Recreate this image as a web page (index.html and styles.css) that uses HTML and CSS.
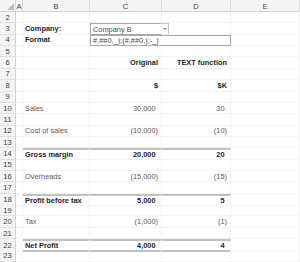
FILE: index.html
```html
<!DOCTYPE html>
<html lang="en">
<head>
  <meta charset="UTF-8" />
  <title>Number format - TEXT function</title>
  <link rel="stylesheet" href="styles.css">
</head>
<body>
  <div class="sheet">
    <div class="row head">
      <div class="corner">
        <svg width="16" height="12" viewBox="0 0 16 12"><polygon points="14,3 14,10 7,10" fill="#bdbdbd" /></svg>
      </div>
      <div class="col">A</div>
      <div class="col">B</div>
      <div class="col">C</div>
      <div class="col">D</div>
      <div class="col">E</div>
    </div>

    <div class="row"><div class="rn">2</div><div class="c"></div><div class="c"></div><div class="c"></div><div class="c"></div><div class="c"></div></div>
    <div class="row">
      <div class="rn">3</div><div class="c"></div>
      <div class="c lbl b">Company:</div>
      <div class="c box">Company B<span class="drop"><svg width="6" height="4" viewBox="0 0 6 4"><polygon points="1,1 5,1 3,3" fill="#888" /></svg></span></div>
      <div class="c"></div><div class="c"></div>
    </div>
    <div class="row">
      <div class="rn">4</div><div class="c"></div>
      <div class="c lbl b">Format</div>
      <div class="c box wide">#,##0,_);(#,##0,);-_)</div>
      <div class="c"></div>
    </div>
    <div class="row"><div class="rn">5</div><div class="c"></div><div class="c"></div><div class="c"></div><div class="c"></div><div class="c"></div></div>
    <div class="row">
      <div class="rn">6</div><div class="c"></div><div class="c"></div>
      <div class="c n b">Original</div>
      <div class="c n b">TEXT function</div>
      <div class="c"></div>
    </div>
    <div class="row"><div class="rn">7</div><div class="c"></div><div class="c"></div><div class="c"></div><div class="c"></div><div class="c"></div></div>
    <div class="row">
      <div class="rn">8</div><div class="c"></div><div class="c"></div>
      <div class="c n b">$</div>
      <div class="c n b">$K</div>
      <div class="c"></div>
    </div>
    <div class="row"><div class="rn">9</div><div class="c"></div><div class="c"></div><div class="c"></div><div class="c"></div><div class="c"></div></div>
    <div class="row">
      <div class="rn">10</div><div class="c"></div>
      <div class="c lbl">Sales</div>
      <div class="c n p">30,000</div>
      <div class="c n p">30</div>
      <div class="c"></div>
    </div>
    <div class="row"><div class="rn">11</div><div class="c"></div><div class="c"></div><div class="c"></div><div class="c"></div><div class="c"></div></div>
    <div class="row">
      <div class="rn">12</div><div class="c"></div>
      <div class="c lbl">Cost of sales</div>
      <div class="c n">(10,000)</div>
      <div class="c n">(10)</div>
      <div class="c"></div>
    </div>
    <div class="row"><div class="rn">13</div><div class="c"></div><div class="c"></div><div class="c"></div><div class="c"></div><div class="c"></div></div>
    <div class="row">
      <div class="rn">14</div><div class="c"></div>
      <div class="c lbl b tt">Gross margin</div>
      <div class="c n p b tt">20,000</div>
      <div class="c n p b tt">20</div>
      <div class="c"></div>
    </div>
    <div class="row"><div class="rn">15</div><div class="c"></div><div class="c"></div><div class="c"></div><div class="c"></div><div class="c"></div></div>
    <div class="row">
      <div class="rn">16</div><div class="c"></div>
      <div class="c lbl">Overheads</div>
      <div class="c n">(15,000)</div>
      <div class="c n">(15)</div>
      <div class="c"></div>
    </div>
    <div class="row"><div class="rn">17</div><div class="c"></div><div class="c"></div><div class="c"></div><div class="c"></div><div class="c"></div></div>
    <div class="row">
      <div class="rn">18</div><div class="c"></div>
      <div class="c lbl b tt">Profit before tax</div>
      <div class="c n p b tt">5,000</div>
      <div class="c n p b tt">5</div>
      <div class="c"></div>
    </div>
    <div class="row"><div class="rn">19</div><div class="c"></div><div class="c"></div><div class="c"></div><div class="c"></div><div class="c"></div></div>
    <div class="row">
      <div class="rn">20</div><div class="c"></div>
      <div class="c lbl">Tax</div>
      <div class="c n">(1,000)</div>
      <div class="c n">(1)</div>
      <div class="c"></div>
    </div>
    <div class="row"><div class="rn">21</div><div class="c"></div><div class="c"></div><div class="c"></div><div class="c"></div><div class="c"></div></div>
    <div class="row">
      <div class="rn">22</div><div class="c"></div>
      <div class="c lbl b tt bb">Net Profit</div>
      <div class="c n p b tt bb">4,000</div>
      <div class="c n p b tt bb">4</div>
      <div class="c"></div>
    </div>
    <div class="row"><div class="rn">23</div><div class="c"></div><div class="c"></div><div class="c"></div><div class="c"></div><div class="c"></div></div>
  </div>
</body>
</html>
```

FILE: styles.css
```css
* {
  box-sizing: border-box;
}

body {
  margin: 0;
  background: #fff;
  font-family: 'Liberation Sans', Arial, sans-serif;
  font-size: 7.4px;
  color: #5a5a5a;
}

.sheet {
  width: 300px;
  height: 262px;
  display: flex;
  flex-direction: column;
  overflow: hidden;
}

.row {
  display: grid;
  grid-template-columns: 16px 7px 67px 72px 69px 69px;
  flex: 1;
  min-height: 0;
}

.row.head {
  flex: 0 0 12px;
  background: #f4f4f4;
  border-bottom: 1px solid #d2d2d2;
}

.corner {
  border-right: 1px solid #d8d8d8;
  line-height: 0;
}

.col {
  display: flex;
  align-items: center;
  justify-content: center;
  border-right: 1px solid #dcdcdc;
  color: #444;
  font-size: 7.6px;
}

.rn {
  display: flex;
  align-items: center;
  justify-content: center;
  background: #f4f4f4;
  border-right: 1px solid #d2d2d2;
  border-bottom: 1px solid #e0e0e0;
  color: #3a3a3a;
  font-size: 7.6px;
}

.c {
  position: relative;
  display: flex;
  align-items: center;
  white-space: nowrap;
  border-right: 1px solid #f3f3f3;
  border-bottom: 1px solid #f3f3f3;
}

.lbl {
  padding-left: 2px;
}

.n {
  justify-content: flex-end;
  padding-right: 3px;
}

/* Excel's _) keeps positives lined up with the closing bracket */
.p::after {
  content: ")";
  visibility: hidden;
}

.b {
  font-weight: bold;
  color: #1e1e1e;
}

.tt {
  border-top: 2px solid #c2c2c2;
}

.bb {
  border-bottom: 2px solid #c2c2c2;
}

.box {
  border: 1px solid #a8a8a8;
  padding-left: 2px;
  color: #4a4a4a;
  background: #fff;
}

.box.wide {
  grid-column: span 2;
}

.drop {
  position: absolute;
  left: 100%;
  top: -1px;
  bottom: -1px;
  width: 8px;
  display: flex;
  align-items: center;
  justify-content: center;
  border: 1px solid #c8c8c8;
  border-left: none;
  background: #fff;
}
```
